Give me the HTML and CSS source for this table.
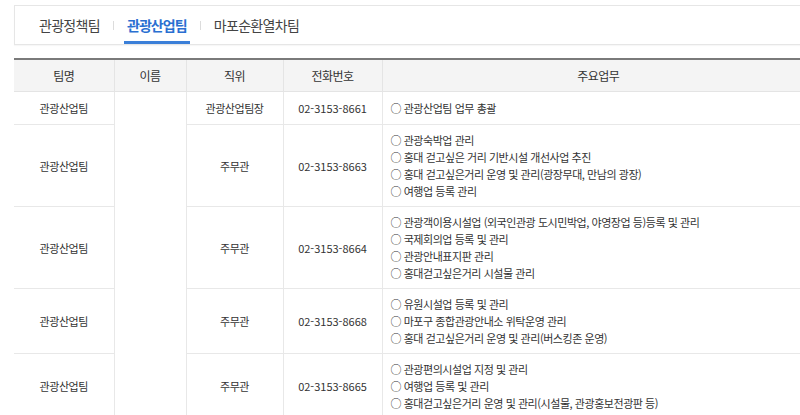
FILE: index.html
```html
<!DOCTYPE html>
<html lang="ko">
<head>
<meta charset="utf-8">
<title>관광산업팀</title>
<link rel="stylesheet" href="styles.css">
</head>
<body>
<div class="page">
  <nav class="tabs">
    <a class="tab">관광정책팀</a>
    <span class="sep"></span>
    <a class="tab active">관광산업팀</a>
    <span class="sep"></span>
    <a class="tab">마포순환열차팀</a>
  </nav>
  <table class="staff">
    <colgroup>
      <col class="c-team"><col class="c-name"><col class="c-pos"><col class="c-tel"><col class="c-work">
    </colgroup>
    <thead>
      <tr><th>팀명</th><th>이름</th><th>직위</th><th>전화번호</th><th>주요업무</th></tr>
    </thead>
    <tbody>
      <tr class="r1">
        <td>관광산업팀</td>
        <td rowspan="5" class="name"></td>
        <td>관광산업팀장</td>
        <td class="tel">02-3153-8661</td>
        <td class="work"><p>○ 관광산업팀 업무 총괄</p></td>
      </tr>
      <tr>
        <td>관광산업팀</td>
        <td>주무관</td>
        <td class="tel">02-3153-8663</td>
        <td class="work">
          <p>○ 관광숙박업 관리</p>
          <p>○ 홍대 걷고싶은 거리 기반시설 개선사업 추진</p>
          <p>○ 홍대 걷고싶은거리 운영 및 관리(광장무대, 만남의 광장)</p>
          <p>○ 여행업 등록 관리</p>
        </td>
      </tr>
      <tr>
        <td>관광산업팀</td>
        <td>주무관</td>
        <td class="tel">02-3153-8664</td>
        <td class="work">
          <p>○ 관광객이용시설업 (외국인관광 도시민박업, 야영장업 등)등록 및 관리</p>
          <p>○ 국제회의업 등록 및 관리</p>
          <p>○ 관광안내표지판 관리</p>
          <p>○ 홍대걷고싶은거리 시설물 관리</p>
        </td>
      </tr>
      <tr>
        <td>관광산업팀</td>
        <td>주무관</td>
        <td class="tel">02-3153-8668</td>
        <td class="work">
          <p>○ 유원시설업 등록 및 관리</p>
          <p>○ 마포구 종합관광안내소 위탁운영 관리</p>
          <p>○ 홍대 걷고싶은거리 운영 및 관리(버스킹존 운영)</p>
        </td>
      </tr>
      <tr>
        <td>관광산업팀</td>
        <td>주무관</td>
        <td class="tel">02-3153-8665</td>
        <td class="work">
          <p>○ 관광편의시설업 지정 및 관리</p>
          <p>○ 여행업 등록 및 관리</p>
          <p>○ 홍대걷고싶은거리 운영 및 관리(시설물, 관광홍보전광판 등)</p>
        </td>
      </tr>
    </tbody>
  </table>
</div>
</body>
</html>
```

FILE: styles.css
```css
html, body {
  margin: 0;
  padding: 0;
  overflow: hidden;
  background: #fff;
}
body {
  font-family: "Noto Sans CJK KR", "Noto Sans", sans-serif;
  color: #333;
}
.page {
  padding: 5px 0 0 14px;
  width: 800px;
}
.tabs {
  display: flex;
  align-items: center;
  height: 38px;
  border: 1px solid #e6e6e6;
  border-right: none;
  box-shadow: 0 1px 1px rgba(0,0,0,0.03);
  padding-left: 21px;
}
.tab {
  display: flex;
  align-items: center;
  height: 38px;
  box-sizing: border-box;
  padding: 3px 3px 0;
  font-size: 14px;
  letter-spacing: -0.7px;
  color: #444;
  border-bottom: 3px solid transparent;
}
.tab.active {
  color: #2a6fd1;
  font-weight: 700;
  border-bottom-color: #3b7fd8;
  letter-spacing: -0.9px;
}
.sep {
  width: 1px;
  height: 9px;
  background: #dcdcdc;
  margin: 0 10px 0 10px;
}
.staff {
  margin-top: 13px;
  width: 800px;
  border-collapse: collapse;
  table-layout: fixed;
  border-top: 2px solid #7a7a7a;
  font-size: 11px;
  letter-spacing: -0.45px;
}
.c-team { width: 100px; }
.c-name { width: 72px; }
.c-pos { width: 97px; }
.c-tel { width: 99px; }
.staff th {
  height: 31px;
  padding: 0;
  background: #f4f4f4;
  font-weight: 400;
  font-size: 12px;
  letter-spacing: -0.6px;
  color: #333;
  border-bottom: 1px solid #e4e4e4;
  border-left: 1px solid #e4e4e4;
}
.staff th:first-child, .staff td:first-child { border-left: none; }
.staff td {
  padding: 7px 0 6px;
  text-align: center;
  line-height: 17px;
  border-bottom: 1px solid #e8e8e8;
  border-left: 1px solid #e8e8e8;
  color: #333;
}
.staff td.tel { letter-spacing: 0; }
.staff td.work {
  text-align: left;
  padding-left: 8px;
}
.staff tr.r1 td { height: 19px; }
.staff td.name { border-bottom: none; }
.work p { margin: 0; }
```
